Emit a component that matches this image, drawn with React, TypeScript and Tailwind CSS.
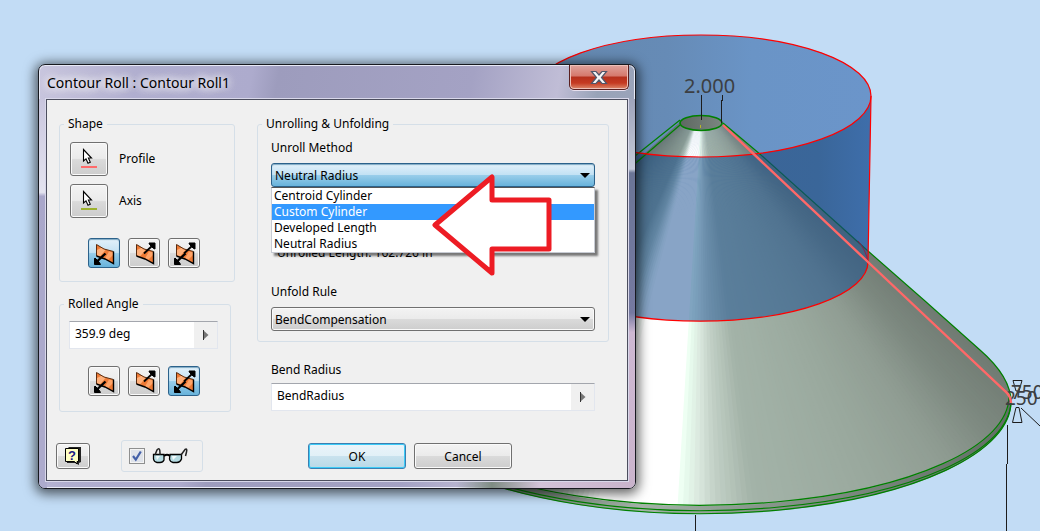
import React from "react";
import clsx from "clsx";

type RGB = [number, number, number];

const APEX = { x: 702, y: 103 };
const SHADE_Y = 400;
const SHADE_STOPS: [number, RGB][] = [
  [360, [100, 112, 104]],
  [570, [140, 156, 146]],
  [596, [176, 192, 182]],
  [618, [240, 246, 242]],
  [626, [255, 255, 255]],
  [682, [255, 255, 255]],
  [687, [234, 255, 240]],
  [698, [220, 234, 224]],
  [712, [194, 208, 198]],
  [740, [163, 179, 168]],
  [830, [154, 169, 158]],
  [900, [144, 157, 147]],
  [960, [125, 137, 128]],
  [1060, [108, 118, 110]],
];

function shadeAt(x: number): string {
  for (let i = 1; i < SHADE_STOPS.length; i++) {
    const [x0, a] = SHADE_STOPS[i - 1];
    const [x1, b] = SHADE_STOPS[i];
    if (x <= x1) {
      const k = (x - x0) / (x1 - x0);
      return `rgb(${a.map((v, n) => Math.round(v + (b[n] - v) * k)).join(",")})`;
    }
  }
  return "rgb(108,118,110)";
}

const WEDGE = 4;
const wedges = Array.from({ length: 175 }, (_, i) => 360 + i * WEDGE).map((x) => {
  const far = (v: number) => APEX.x + (v - APEX.x) * 1.6;
  const yFar = APEX.y + (SHADE_Y - APEX.y) * 1.6;
  return {
    fill: shadeAt(x + WEDGE / 2),
    points: `${APEX.x},${APEX.y} ${far(x)},${yFar} ${far(x + WEDGE + 2)},${yFar}`,
  };
});

function Scene() {
  return (
    <svg
      className="absolute inset-0 h-full w-full"
      viewBox="0 0 1040 531"
      preserveAspectRatio="xMinYMin slice"
      role="img"
      aria-label="Cone model preview"
    >
      <defs>
        <linearGradient id="backWall" x1="531" x2="871" y1="0" y2="0" gradientUnits="userSpaceOnUse">
          <stop offset="0" stopColor="#6488ad" />
          <stop offset="0.4" stopColor="#668bb6" />
          <stop offset="0.65" stopColor="#6a94c6" />
          <stop offset="1" stopColor="#6b95ca" />
        </linearGradient>
        <linearGradient id="frontWall" x1="740" x2="871" y1="0" y2="0" gradientUnits="userSpaceOnUse">
          <stop offset="0" stopColor="#3b6597" />
          <stop offset="0.6" stopColor="#3a6699" />
          <stop offset="1" stopColor="#3e6eab" />
        </linearGradient>
        <linearGradient id="rim" x1="480" x2="1012" y1="0" y2="0" gradientUnits="userSpaceOnUse">
          <stop offset="0" stopColor="#5d6a61" />
          <stop offset="0.3" stopColor="#a4b2a8" />
          <stop offset="0.5" stopColor="#8b998f" />
          <stop offset="1" stopColor="#626d66" />
        </linearGradient>
        <linearGradient id="bore" x1="680" x2="722" y1="0" y2="0" gradientUnits="userSpaceOnUse">
          <stop offset="0" stopColor="#5e6861" />
          <stop offset="1" stopColor="#7b8681" />
        </linearGradient>
        <clipPath id="coneBody">
          <path d="M679 123 Q690 115 701 115 Q714 115 723 123 L868 251 L980 350 Q1011 377 1011 401 A310 109 0 0 1 391 401 Q392 370 430 342 Z" />
        </clipPath>
      </defs>

      <path d="M531 96 A170 61 0 0 1 871 96 L868 262 A167 59 0 0 1 533 262 Z" fill="url(#frontWall)" />
      <ellipse cx="701" cy="96" rx="170" ry="61" fill="url(#backWall)" />

      <g clipPath="url(#coneBody)">
        {wedges.map((w) => (
          <polygon key={w.points} points={w.points} fill={w.fill} />
        ))}
      </g>
      <path d="M1009 397 A308 109 0 0 1 393 397 L391 402 A310 112 0 0 0 1011 402 Z" fill="url(#rim)" />

      <g clipPath="url(#coneBody)">
        <path d="M531 96 A170 61 0 0 0 871 96 L868 262 A167 59 0 0 1 533 262 Z" fill="#11498d" fillOpacity="0.5" />
      </g>

      <g fill="none" stroke="#008000" strokeWidth="1.2">
        <path d="M723 123 L761 155" />
        <path d="M868 251 L925 301 L980 350 Q1011 377 1011 402 A310 112 0 0 1 430 456" />
        <path d="M1009 397 A308 109 0 0 1 430 448" />
        <path d="M1011 402 A310 110 0 0 1 430 454" />
        <path d="M761 155 L868 251" stroke="#0d5a55" />
        <path d="M680 120 L630 160 M680 125 L630 168" />
      </g>
      <ellipse cx="701" cy="123" rx="21" ry="7.5" fill="url(#bore)" stroke="#008000" strokeWidth="1.6" />

      <g fill="none" stroke="#ff0000" strokeWidth="1.2">
        <ellipse cx="701" cy="96" rx="170" ry="61" />
        <path d="M871 96 L868 262 A167 59 0 0 1 533 262" />
      </g>
      <path d="M858 241 Q866 250 868 262" fill="none" stroke="#8c1f4c" />

      <g fill="none" stroke="#1c1c1c" strokeWidth="1">
        <path d="M701.5 95 V120 M722.5 95 V101 M721.5 100 V123" />
        <path d="M695.5 515 V531 M1007.5 425 V464 M1006.5 464 V531" />
        <path d="M1013 380.5 H1022 L1019 391 H1016 Z M1016 407.5 H1019 L1022 422.5 H1012.5 Z" />
        <path d="M1021 408 L1040 426" />
      </g>
      <path d="M700.5 125 V128" stroke="#b5b52a" />
      <g fill="#3c3f43" className="font-['Noto_Sans',sans-serif]">
        <text x="684" y="93" fontSize="20">2.000</text>
        <text x="1011" y="399" fontSize="19">750</text>
        <text x="1005" y="405" fontSize="19">250</text>
      </g>
      <path d="M723 125 L868 262 L1005 391 Q1011 396 1011 403" fill="none" stroke="#ff6868" strokeWidth="2.4" />
    </svg>
  );
}

const raised =
  "border border-[#707070] bg-[linear-gradient(#f3f3f3_0%,#ebebeb_48%,#dadada_52%,#cdcdcd_100%)] shadow-[inset_0_0_0_1px_#fafafa]";
const lit =
  "border border-[#2c628b] bg-[linear-gradient(#e3f1fa_0%,#c3e2f4_48%,#98cdea_52%,#68b3db_100%)] shadow-[inset_0_1px_1px_#7fa9c4]";

function PickButton({ label, color }: { label: string; color: string }) {
  return (
    <label className="flex items-center gap-[11px]">
      <button
        type="button"
        aria-label={`Select ${label}`}
        className={clsx("flex h-[34px] w-[38px] items-center justify-center rounded-[3px]", raised)}
      >
        <svg width="18" height="22" viewBox="0 0 18 22">
          <path
            d="M3.5 1.5 V13 L6 10.8 L8 15.3 L10.3 14.3 L8.4 10 H11.5 Z"
            fill="#fff"
            stroke="#000"
            strokeWidth="1.1"
          />
          <path d="M1 19 H17" stroke={color} strokeWidth="2" />
        </svg>
      </button>
      <span>{label}</span>
    </label>
  );
}

type Side = "front" | "back" | "both";

function SideIcon({ side }: { side: Side }) {
  return (
    <svg width="24" height="24" viewBox="0 0 24 24">
      <path d="M4.5 3.5 L12 8 L21.5 10.5 V22.5 L13 18 L4.5 15 Z" fill="#ee7a35" />
      <path d="M5 9 L10 6.5 L14 8.5 L8 15.5 L5 14.5 Z" fill="#ffb07a" />
      <path d="M17 10.5 L21 11.5 V14 L16 19 L13 17.5 Z" fill="#ffa468" />
      <path d="M4.5 15 V3.5 L12 8 L21.5 10.5" fill="none" stroke="#5a2c10" strokeWidth="1" />
      <path d="M21.5 10.5 V22.5 L13 18 L4.5 15" fill="none" stroke="#000" strokeWidth="1.4" />
      {side !== "back" && (
        <g>
          <path d="M13.5 12.5 L5 20.5" stroke="#000" strokeWidth="2.4" />
          <path d="M3 17 L7.5 21.5 L8.5 23.5 H2.5 V17.5 Z" fill="#000" stroke="#000" />
        </g>
      )}
      {side !== "front" && (
        <g>
          <path d="M12 12.5 L20 5" stroke="#000" strokeWidth="1.8" />
          <path d="M17 2 H23 V8 L21.5 7.5 L17.5 3.5 Z" fill="#000" stroke="#000" />
        </g>
      )}
    </svg>
  );
}

function SideButtons({ active, group }: { active: Side; group: string }) {
  const sides: Side[] = ["front", "back", "both"];
  return (
    <div className="flex gap-2" role="group" aria-label={group}>
      {sides.map((s) => (
        <button
          key={s}
          type="button"
          aria-label={`${group} ${s}`}
          aria-pressed={s === active}
          className={clsx("flex h-[30px] w-8 items-center justify-center rounded-[3px]", s === active ? lit : raised)}
        >
          <SideIcon side={s} />
        </button>
      ))}
    </div>
  );
}

function Group({
  title,
  className,
  bodyClass,
  children,
}: {
  title: string;
  className?: string;
  bodyClass: string;
  children: React.ReactNode;
}) {
  return (
    <fieldset className={clsx("min-w-0 rounded-[3px] border border-[#d5dfe8]", className)}>
      <legend className="ml-1 px-1">{title}</legend>
      <div className={bodyClass}>{children}</div>
    </fieldset>
  );
}

function ValueField({ id, label, value }: { id: string; label: string; value: string }) {
  return (
    <div className="flex h-7 border border-[#e2e6ee] border-t-[#a3a6ad]">
      <input
        id={id}
        aria-label={label}
        defaultValue={value}
        className="min-w-0 flex-1 bg-white px-[5px] pb-[2px] outline-none"
      />
      <button type="button" aria-label={`${label} options`} className="flex w-[23px] items-center justify-center">
        <svg width="6" height="10" viewBox="0 0 6 10">
          <path d="M0.5 0.5 L5.5 5 L0.5 9.5 Z" fill="#777" />
          <path d="M0.5 0 V10" stroke="#333" />
        </svg>
      </button>
    </div>
  );
}

function Combo({ id, value, active, options }: { id: string; value: string; active?: boolean; options: string[] }) {
  return (
    <div className="relative">
      <select
        id={id}
        defaultValue={value}
        className={clsx(
          "block h-6 w-full appearance-none rounded-[3px] px-[3px] pt-px outline-none",
          active ? lit : raised,
        )}
      >
        {options.map((o) => (
          <option key={o}>{o}</option>
        ))}
      </select>
      <svg className="pointer-events-none absolute top-[10px] right-[5px]" width="10" height="5" viewBox="0 0 10 5">
        <path d="M0 0 H10 L5 5 Z" fill="#000" />
      </svg>
    </div>
  );
}

const methods = ["Centroid Cylinder", "Custom Cylinder", "Developed Length", "Neutral Radius"];

function Dialog() {
  return (
    <section
      role="dialog"
      aria-labelledby="dialog-title"
      className="absolute top-16 left-[38px] w-[598px] rounded-[7px] border border-[#17191f] bg-[linear-gradient(100deg,#c9c6de_0%,#b0aecf_15%,#adabcd_32%,#9d9cbd_36%,#a4a2c4_65%,#c0bdd6_78%,#98a3b8_84%,#9fa4bb_100%)] shadow-[inset_0_0_0_1px_#e8eaf6,0_2px_12px_3px_rgba(0,0,0,0.6)]"
    >
      <header className="flex h-[34px] items-start justify-between pr-[6px] pl-2">
        <h1
          id="dialog-title"
          className="pt-2 text-sm leading-5 [text-shadow:0_0_8px_#fff,0_0_8px_#fff,0_0_14px_#fff]"
        >
          Contour Roll : Contour Roll1
        </h1>
        <button
          type="button"
          aria-label="Close"
          className="flex h-[25px] w-[60px] items-center justify-center rounded-b-[5px] border border-t-0 border-[#5a1f1f] bg-[linear-gradient(#e0a49d_0%,#d5786c_46%,#b5301d_50%,#c53a22_75%,#dc8a6c_100%)] shadow-[inset_0_0_0_1px_#eec0b8,0_1px_0_#e8e0ee]"
        >
          <svg width="18" height="15" viewBox="0 0 18 15">
            <path
              d="M1.5 1.5 H6 L9 5 L12 1.5 H16.5 L11.5 7.5 L16.5 13.5 H12 L9 10 L6 13.5 H1.5 L6.5 7.5 Z"
              fill="#f6f6f6"
              stroke="#50566a"
              strokeWidth="1.2"
            />
          </svg>
        </button>
      </header>
      <div className="rounded-b-[6px] bg-[linear-gradient(90deg,transparent_0%,transparent_70%,#7e8c83_76%,#d2c2d8_84%,#c9b3cb_100%),linear-gradient(180deg,#9fa4bb_0%,#c4cad8_18%,#6b7596_19%,#7579a0_55%,#cdb8d2_60%,#cbb4cc_100%),linear-gradient(180deg,#c9c6de_0%,#e4e4f0_24%,#a9a7ca_25%,#adabcd_100%)] bg-[length:100%_8px,8px_100%,8px_100%] bg-[position:bottom,right,left] bg-no-repeat px-[7px] pb-[7px]">
        <div className="relative border border-[#4c4e5e] bg-[#f0f0f0] pt-4 pr-[18px] pb-2 pl-3 shadow-[0_0_0_1px_#d9d8ea]">
          <div className="flex items-start gap-[22px]">
            <div className="flex w-44 flex-col gap-[14px]">
              <Group title="Shape" bodyClass="px-[10px] pb-[13px]">
                <div className="flex flex-col gap-2 pt-[10px] pb-5">
                  <PickButton label="Profile" color="#ff6b6b" />
                  <PickButton label="Axis" color="#9db22f" />
                </div>
                <div className="pl-[18px]">
                  <SideButtons active="front" group="Shape side" />
                </div>
              </Group>
              <Group title="Rolled Angle" className="mr-1" bodyClass="pr-3 pb-[15px] pl-[9px]">
                <div className="pt-[9px] pb-[17px]">
                  <ValueField id="angle" label="Rolled Angle" value="359.9 deg" />
                </div>
                <div className="pl-[19px]">
                  <SideButtons active="both" group="Roll side" />
                </div>
              </Group>
            </div>

            <div className="min-w-0 flex-1">
              <Group title="Unrolling & Unfolding" bodyClass="px-[13px] pt-2 pb-[10px]">
                <label htmlFor="method" className="block pb-[7px]">
                  Unroll Method
                </label>
                <div className="relative">
                  <Combo id="method" value="Neutral Radius" active options={methods} />
                  <ul
                    role="listbox"
                    aria-label="Unroll Method"
                    className="absolute top-full right-0 left-0 z-10 border border-[#c8ccd4] border-t-[#555] bg-white shadow-[3px_3px_2px_rgba(0,0,0,0.5)]"
                  >
                    {methods.map((m) => (
                      <li
                        key={m}
                        role="option"
                        aria-selected={m === "Custom Cylinder"}
                        className={clsx("px-[2px]", m === "Custom Cylinder" && "bg-[#3399ff] text-white")}
                      >
                        {m}
                      </li>
                    ))}
                  </ul>
                </div>
                <p className="pt-[58px] pb-[23px] pl-[6px]">Unrolled Length: 162.726 in</p>
                <label htmlFor="rule" className="block pb-[7px]">
                  Unfold Rule
                </label>
                <Combo id="rule" value="BendCompensation" options={["BendCompensation"]} />
              </Group>
              <div className="px-[14px] pt-5">
                <label htmlFor="bend" className="block pb-[5px]">
                  Bend Radius
                </label>
                <ValueField id="bend" label="Bend Radius" value="BendRadius" />
              </div>
            </div>
          </div>

          <footer className="-ml-[3px] flex items-center pt-7">
            <button
              type="button"
              aria-label="Help"
              className={clsx("flex h-[26px] w-[34px] items-center justify-center rounded-[3px]", raised)}
            >
              <svg width="18" height="20" viewBox="0 0 18 20">
                <path d="M3 3 L5 1 H17 V16 L15 17 V19 L11 17 H3 Z" fill="#222" />
                <path d="M1.5 2.5 H14.5 V15.5 H13 V18 L10.5 15.5 H1.5 Z" fill="#ffffc4" stroke="#000" />
                <text
                  x="8"
                  y="14"
                  fontSize="13"
                  fontWeight="700"
                  textAnchor="middle"
                  fill="#191985"
                  className="font-['Liberation_Sans',sans-serif]"
                >
                  ?
                </text>
              </svg>
            </button>
            <label className="ml-[31px] flex h-8 w-[82px] items-center gap-[7px] rounded-[3px] border border-[#d5dfe8] pl-[7px]">
              <span className="relative flex size-4 items-center justify-center">
                <input
                  type="checkbox"
                  defaultChecked
                  aria-label="Preview"
                  className="peer size-4 appearance-none border border-[#8e8f8f] bg-[#dfe3ea] shadow-[inset_0_0_0_1px_#f4f4f4]"
                />
                <svg
                  className="pointer-events-none absolute hidden peer-checked:block"
                  width="12"
                  height="12"
                  viewBox="0 0 12 12"
                >
                  <path d="M2 6 L4.8 9.6 L9.8 1.5" fill="none" stroke="#4360a8" strokeWidth="2.2" />
                </svg>
              </span>
              <svg width="36" height="18" viewBox="0 0 36 18">
                <path d="M1.5 7.5 H12 V13 Q11 15.5 8 15.5 H5 Q2 15 1.5 12 Z" fill="#b5dbe2" stroke="#000" strokeWidth="1.3" />
                <path d="M18 7.5 H29.5 V12 Q28 15.5 25 15.5 H21 Q18 15 17.5 12 Z" fill="#b5dbe2" stroke="#000" strokeWidth="1.3" />
                <path d="M4 9 H8 L5 13 Z M20 9 H25 L21 13 Z" fill="#f3fbfc" />
                <path d="M12 9 Q15 6.5 18 9" fill="none" stroke="#000" strokeWidth="1.8" />
                <path d="M3 8 L5 3 Q8 -0.5 8 6 V8" fill="none" stroke="#222" strokeWidth="1.5" />
                <path d="M29 8 L33 2.5 Q35.5 1 34.5 5 L33.5 9" fill="none" stroke="#222" strokeWidth="1.5" />
              </svg>
            </label>
            <button
              type="button"
              className="ml-[105px] h-[26px] w-[98px] rounded-[3px] border border-[#3c7fb1] bg-[linear-gradient(#eaf4fa_0%,#e2f0f7_48%,#c9e2ee_52%,#b9d9e7_100%)] pt-px shadow-[inset_0_0_0_1px_#3ccbf7]"
            >
              OK
            </button>
            <button type="button" className={clsx("ml-2 h-[26px] w-[98px] rounded-[3px] pt-px", raised)}>
              Cancel
            </button>
          </footer>

          <svg
            className="pointer-events-none absolute top-[74px] left-[385px] z-20"
            width="122"
            height="104"
            viewBox="0 0 122 104"
            aria-hidden="true"
          >
            <path d="M3 51 L60 3 V26 H117 V75 H60 V99 Z" fill="#fff" stroke="#ed1c24" strokeWidth="5" strokeLinejoin="round" />
          </svg>
        </div>
      </div>
    </section>
  );
}

export default function App() {
  return (
    <main className="relative min-h-screen overflow-hidden bg-[#c2dcf5] font-['Noto_Sans',sans-serif] text-xs leading-4 text-black">
      <Scene />
      <Dialog />
    </main>
  );
}
